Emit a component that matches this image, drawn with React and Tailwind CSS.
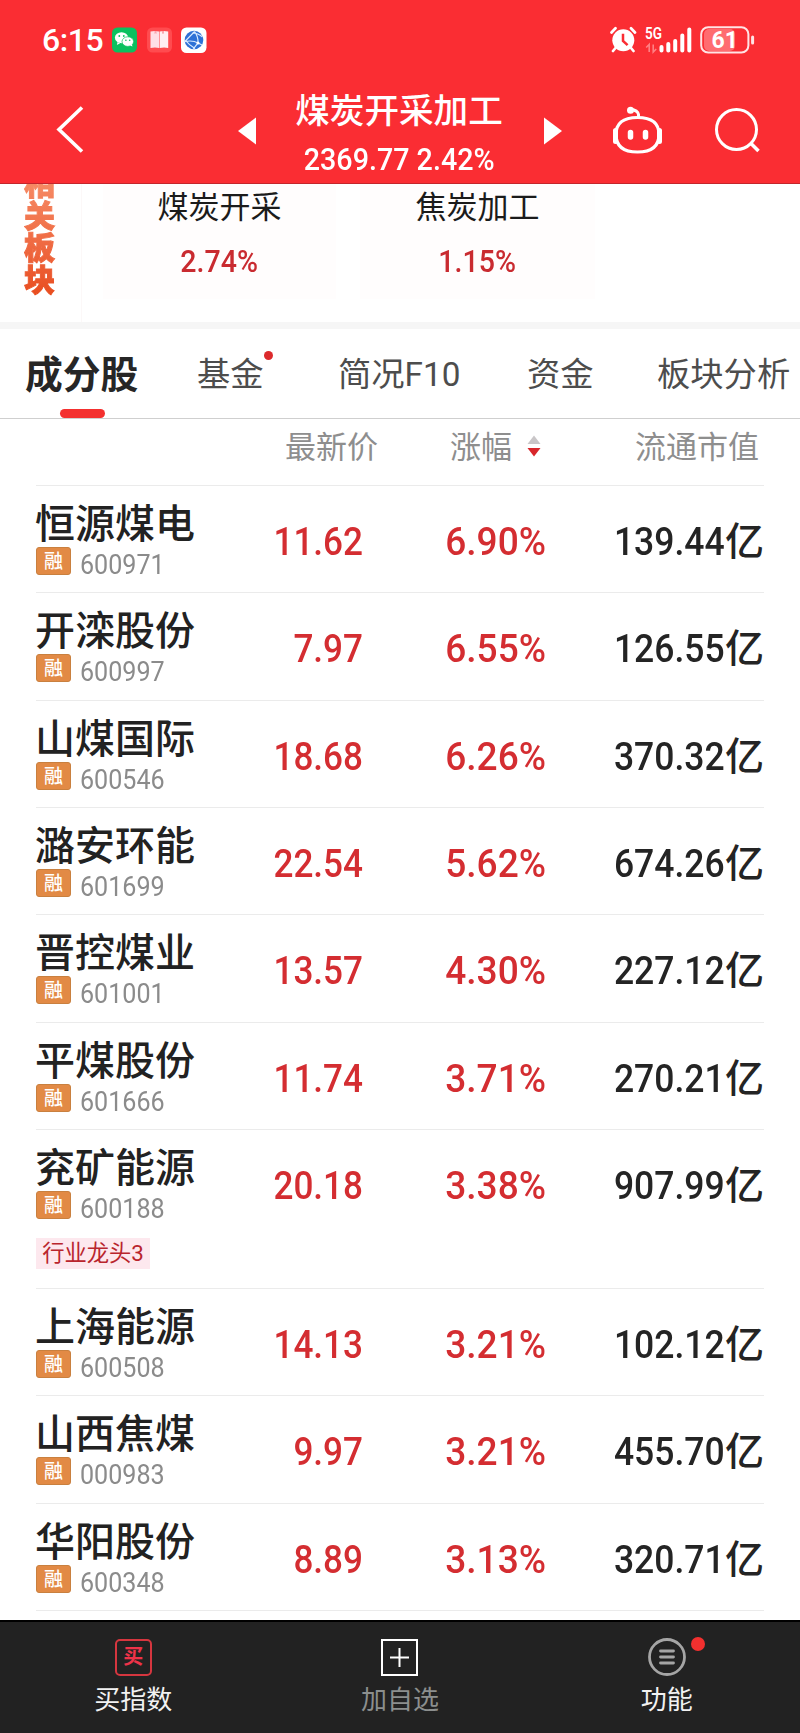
import React from 'react';

const stocks = [
    { name: '恒源煤电', code: '600971', price: '11.62', change: '6.90%', cap: '139.44' },
    { name: '开滦股份', code: '600997', price: '7.97', change: '6.55%', cap: '126.55' },
    { name: '山煤国际', code: '600546', price: '18.68', change: '6.26%', cap: '370.32' },
    { name: '潞安环能', code: '601699', price: '22.54', change: '5.62%', cap: '674.26' },
    { name: '晋控煤业', code: '601001', price: '13.57', change: '4.30%', cap: '227.12' },
    { name: '平煤股份', code: '601666', price: '11.74', change: '3.71%', cap: '270.21' },
    { name: '兖矿能源', code: '600188', price: '20.18', change: '3.38%', cap: '907.99', tag: '行业龙头3' },
    { name: '上海能源', code: '600508', price: '14.13', change: '3.21%', cap: '102.12' },
    { name: '山西焦煤', code: '000983', price: '9.97', change: '3.21%', cap: '455.70' },
    { name: '华阳股份', code: '600348', price: '8.89', change: '3.13%', cap: '320.71' },
];

const StatusBar = () => (
    <div className="h-[80px] flex items-center">
        <div className="w-[68px] ml-[42px] text-[32px] font-medium leading-none tracking-[-0.4px]">6:15</div>
        <svg width="97" height="26" viewBox="0 0 97 26" className="ml-[1px]">
            <rect x="1" y="0.5" width="25" height="25" rx="5.5" fill="#0bc15f" />
            <ellipse cx="10.5" cy="10.7" rx="6.6" ry="5.5" fill="#fff" />
            <path d="M6.5 15l-.6 3 3.2-1.8z" fill="#fff" />
            <circle cx="8.3" cy="9" r="0.9" fill="#0bc15f" />
            <circle cx="12.8" cy="9" r="0.9" fill="#0bc15f" />
            <ellipse cx="16.8" cy="14.6" rx="5.8" ry="4.8" fill="#fff" stroke="#0bc15f" strokeWidth="0.7" />
            <path d="M19 18.4l2.4 1.2-.5-2.6z" fill="#fff" />
            <circle cx="14.9" cy="13.2" r="0.8" fill="#0bc15f" />
            <circle cx="18.7" cy="13.2" r="0.8" fill="#0bc15f" />

            <rect x="36" y="0.5" width="25" height="25" rx="5.5" fill="#ff4b4f" />
            <path d="M39.5 4.5q4-1.2 8.6 0v16.5q-4-1-8.6 0z" fill="#ffdfe6" />
            <path d="M48.600 4.5q4-1.2 8.600 0v16.5q-4-1-8.600 0z" fill="#ffeef2" />
            <path d="M43.500 4v3l1-.8 1 .8V4M51 4v3l1-.8 1 .8V4" fill="#f9a6af" />

            <rect x="70" y="0.5" width="25.5" height="25.5" rx="5.5" fill="#fff" />
            <circle cx="83" cy="13" r="9.3" fill="#2e71d6" />
            <path d="M83.6 4.5L73.8 14.5Q82 13 87 16L82.3 21.8M83.6 4.5Q87.5 10 87 16L91 18M74.5 13.5Q78 18 84 21.5M81.5 6Q87 6 91.5 10" fill="none" stroke="#d8eaff" strokeWidth="1.2" />
            <circle cx="87" cy="16" r="1.5" fill="#fff" />
        </svg>
        <svg width="146" height="30" viewBox="0 0 146 30" className="ml-auto mr-[44px]">
            {/* alarm */}
            <circle cx="13.3" cy="15.3" r="11" fill="#fff" />
            <path d="M5.5 23l-2.5 3M21 23l2.5 3M1.5 7.5l4-4.2M25 7.5l-4-4.2" stroke="#fff" strokeWidth="2.7" strokeLinecap="round" />
            <path d="M13 8.7v7.3l4.6 4.2" fill="none" stroke="#fa2d33" strokeWidth="2.5" />
            {/* network */}
            <text x="35" y="14.2" fontSize="16.5" fontWeight="600" fill="#fff" textLength="17" lengthAdjust="spacingAndGlyphs">5G</text>
            <path d="M39.2 27v-7.5l-3 3M43.2 19.5V27l3-3" fill="none" stroke="#ff8084" strokeWidth="1.6" />
            <g stroke="#fff" strokeWidth="4" strokeLinecap="round">
                <path d="M51.5 22v3.5M58.3 19v6.5M65.2 16v9.5M72.3 10.5v15M79.3 4.5v21" />
            </g>
            {/* battery */}
            <rect x="94" y="4" width="31" height="22" rx="5" fill="#ff6c70" />
            <rect x="91.2" y="2.2" width="47.2" height="25.4" rx="7" fill="none" stroke="#ffe4e5" strokeWidth="2" />
            <path d="M142.6 12v6" stroke="#ffe4e5" strokeWidth="3" strokeLinecap="round" />
            <text x="101.5" y="23.3" fontSize="23" fontWeight="700" fill="#fff">61</text>
        </svg>
    </div>
);

const TitleBar = () => (
    <div className="h-[103px] flex">
        <svg width="60" height="103" viewBox="0 0 60 103" className="ml-[40px]">
            <path d="M42 27.5L19 49.5 42 71.5" fill="none" stroke="#fff" strokeWidth="3.6" />
        </svg>
        <svg width="20" height="28" viewBox="0 0 20 28" className="ml-[137px] mt-[37px]">
            <path d="M1 14L19 0.5v27z" fill="#fff" />
        </svg>
        <div className="w-[242px] ml-[21px] flex flex-col items-center">
            <div className="mt-[14px] text-[34.6px] leading-none font-medium whitespace-nowrap">煤炭开采加工</div>
            <div className="mt-[15px] text-[31px] leading-none font-medium whitespace-nowrap origin-center scale-x-[0.925]">2369.77 2.42%</div>
        </div>
        <svg width="20" height="28" viewBox="0 0 20 28" className="ml-[23px] mt-[37px]">
            <path d="M19 14L1 0.5v27z" fill="#fff" />
        </svg>
        {/* assistant */}
        <svg width="56" height="50" viewBox="0 0 56 50" className="ml-[47px] mt-[25px]" fill="none" stroke="#fff">
            <path d="M27.500 12.500c-15 0-21.500 6-21.500 17 0 12.500 8 17.500 21.500 17.500s21.500-5 21.500-17.500c0-11-6.500-17-21.500-17z" strokeWidth="3.2" />
            <path d="M5.500 25.500v11M49.500 25.500v11" strokeWidth="5" strokeLinecap="round" />
            <path d="M28.500 12.500V9.500q-.8-4.500-8-5" strokeWidth="3" />
            <circle cx="20.500" cy="5.200" r="3.500" fill="#fff" stroke="none" />
            <path d="M20.500 27.500v4.500M35.500 27.500v4.500" strokeWidth="5.500" strokeLinecap="round" />
        </svg>
        <svg width="48" height="48" viewBox="0 0 48 48" className="ml-[48px] mt-[26px]" fill="none" stroke="#fff">
            <circle cx="22.500" cy="23.500" r="20" strokeWidth="3" />
            <path d="M36.500 37l8 8" strokeWidth="3.600" />
        </svg>
    </div>
);

const Sector = ({ name, change, className }) => (
    <div className={`h-[115px] bg-[#fffdfd] flex flex-col items-center ${className}`}>
        <div className="mt-[8px] text-[31px] leading-none text-[#1b1b1b]">{name}</div>
        <div className="mt-[23px] text-[31px] leading-none font-medium text-[#c92b30] origin-center scale-x-[0.92]">{change}</div>
    </div>
);

const RelatedSectors = () => (
    <div className="h-[138px] shrink-0 flex overflow-hidden">
        <div className="w-[82px] h-full border-r border-[#fcf8f8]">
            <div className="w-[32px] ml-[24px] -mt-[15px] flex flex-col text-[31px] leading-[32px] font-black text-transparent [-webkit-text-stroke:1px_transparent] bg-clip-text bg-linear-to-b from-[#f7906b] to-[#e84b1c]">
                <span>相</span>
                <span>关</span>
                <span>板</span>
                <span>块</span>
            </div>
        </div>
        <Sector name="煤炭开采" change="2.74%" className="ml-[21px] w-[233px]" />
        <Sector name="焦炭加工" change="1.15%" className="ml-[24px] w-[235px]" />
    </div>
);

const Tabs = () => (
    <div className="h-[90px] shrink-0 pl-[25px] flex border-b border-[#cfcfcf] text-[33.3px] leading-none text-[#4d4d4d] whitespace-nowrap">
        <div className="w-[172px] relative pt-[28px] text-[37.8px] font-bold text-[#262626]">
            成分股
            <span className="absolute left-[35px] bottom-0 w-[45px] h-[9px] rounded-full bg-[#f4302f]" />
        </div>
        <div className="w-[141px] relative pt-[29px]">
            基金
            <span className="absolute left-[67px] top-[22px] w-[9px] h-[9px] rounded-full bg-[#dc2a2c]" />
        </div>
        <div className="w-[189px] pt-[29px]">简况F10</div>
        <div className="w-[130px] pt-[29px]">资金</div>
        <div className="pt-[29px]">板块分析</div>
    </div>
);

const TableHead = () => (
    <div className="h-[66px] shrink-0 pt-[13px] pl-[285px] flex text-[31px] leading-none text-[#8e8e8e]">
        <div className="w-[165px]">最新价</div>
        <div className="w-[185px] flex">
            涨幅
            <svg width="14" height="22" viewBox="0 0 14 22" className="ml-[15px] mt-[3px]">
                <path d="M7 0.500L13.500 9H.5z" fill="#c9c6c8" />
                <path d="M.5 13h13L7 21.500z" fill="#d8262b" />
            </svg>
        </div>
        <div>流通市值</div>
    </div>
);

const StockRow = ({ stock }) => (
    <div className={`mx-[36px] border-t border-[#ebebeb] flex flex-col ${stock.tag ? 'h-[158.8px]' : 'h-[107.37px]'}`}>
        <div className="flex leading-none">
            <div className="w-[190px] pt-[19px]">
                <div className="-ml-[1px] text-[40px] font-medium text-[#222]">{stock.name}</div>
                <div className="mt-[2px] flex">
                    <span className="w-[35px] h-[28px] rounded-[3px] border border-[#c9803f] bg-[#e28a45] text-white text-[19px] leading-[27px] font-medium text-center">融</span>
                    <span className="ml-[9px] mt-[5px] text-[27px] text-[#8b8b8b] origin-left scale-x-[0.93]">{stock.code}</span>
                </div>
            </div>
            <div className="w-[137px] pt-[37px] text-right text-[39px] font-medium text-[#d42d31]">
                <div className="origin-right scale-x-[0.9]">{stock.price}</div>
            </div>
            <div className="w-[183px] pt-[37px] text-right text-[39px] font-medium text-[#d42d31]">
                <div className="origin-right scale-x-[0.95]">{stock.change}</div>
            </div>
            <div className="flex-1 pt-[37px] flex justify-end text-[39px] font-medium text-[#242424] whitespace-nowrap">
                <div className="origin-right scale-x-[0.91]">{stock.cap}</div>
                <div>亿</div>
            </div>
        </div>
        {stock.tag && (
            <div className="w-[114px] h-[31px] mt-[15px] bg-[#fde8ee] text-[#b9252d] text-[22.3px] leading-[31px] text-center">{stock.tag}</div>
        )}
    </div>
);

const BottomBar = () => (
    <div className="h-[113px] shrink-0 bg-[#222] border-t-2 border-black grid grid-cols-3 text-[26px] leading-none text-[#f2f2f2]">
        <div className="flex flex-col items-center">
            <div className="mt-[17px] w-[37px] h-[37px] rounded-[5px] border-[2.5px] border-[#d6363f] text-[#ee3349] text-[20px] leading-[33px] font-bold text-center">买</div>
            <div className="mt-[11px]">买指数</div>
        </div>
        <div className="flex flex-col items-center">
            <svg width="37" height="37" viewBox="0 0 37 37" className="mt-[17px]" fill="none" stroke="#fff" strokeWidth="2">
                <rect x="1" y="1" width="35" height="35" />
                <path d="M9 18.500h19M18.500 9v19" />
            </svg>
            <div className="mt-[11px] text-[#8c8f8e]">加自选</div>
        </div>
        <div className="flex flex-col items-center">
            <div className="relative mt-[16px] h-[38px]">
                <svg width="38" height="38" viewBox="0 0 38 38" fill="none" stroke="#a5a5a5" strokeLinecap="round">
                    <circle cx="19" cy="19" r="17.500" strokeWidth="2.800" />
                    <path d="M12.500 13h13M12.500 19h13M12.500 25h13" strokeWidth="2.800" />
                </svg>
                <span className="absolute left-[43px] -top-[1px] w-[14px] h-[14px] rounded-full bg-[#f2302f]" />
            </div>
            <div className="mt-[11px]">功能</div>
        </div>
    </div>
);

const App = () => {
    return (
        <div className="w-[800px] h-[1733px] overflow-hidden bg-white flex flex-col font-['Roboto','Noto_Sans_CJK_SC',sans-serif]">
            <header className="h-[184px] shrink-0 bg-[#fa2d33] border-b border-[#c3262c] text-white">
                <StatusBar />
                <TitleBar />
            </header>
            <RelatedSectors />
            <div className="h-[7px] shrink-0 bg-[#f6f6f6]" />
            <Tabs />
            <TableHead />
            <main className="h-[1135px] shrink-0 overflow-hidden">
                {stocks.map((s) => (
                    <StockRow key={s.code} stock={s} />
                ))}
                <div className="mx-[36px] border-t border-[#ebebeb]" />
            </main>
            <BottomBar />
        </div>
    );
};

export default App;
